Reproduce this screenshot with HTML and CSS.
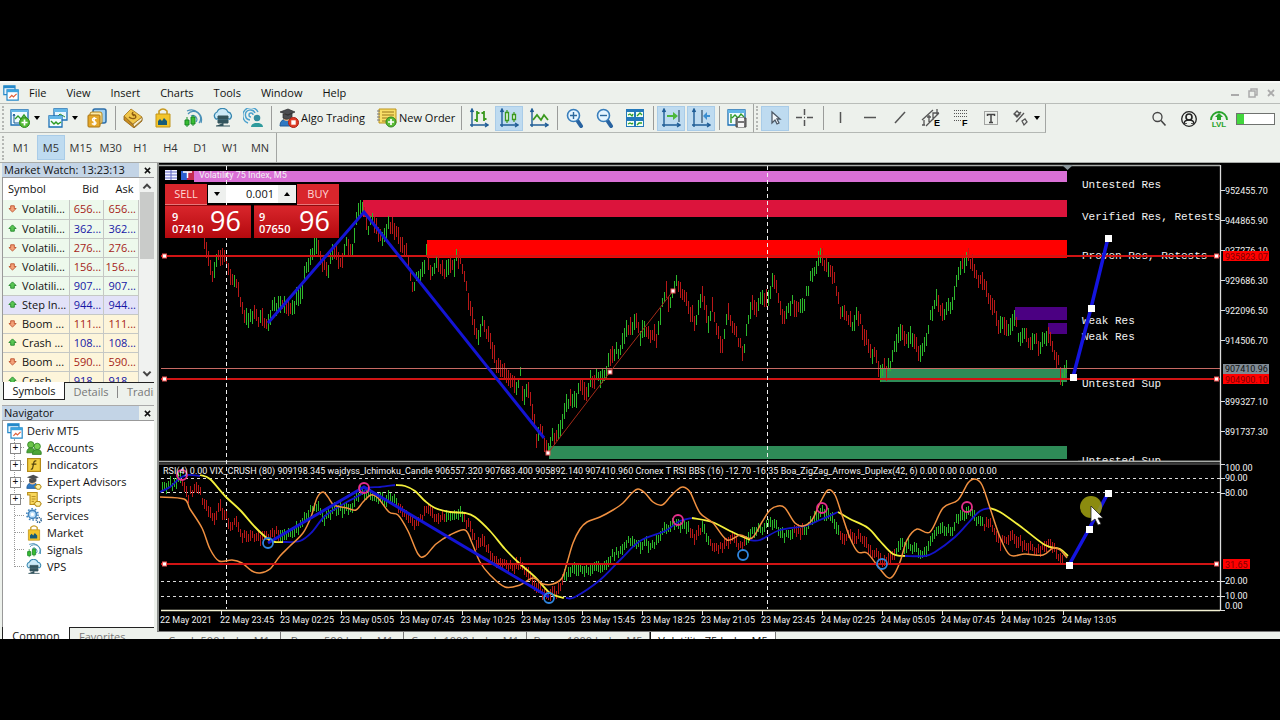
FILE: index.html
```html
<!DOCTYPE html>
<html lang="en">
<head>
<meta charset="utf-8">
<title>Deriv MT5</title>
<link rel="stylesheet" href="styles.css">
</head>
<body>
<svg class="defs" aria-hidden="true">
  <symbol id="i-app" viewBox="0 0 20 20"><path d="M1 1h14v11H1z" fill="#e8f4fc" stroke="#2589c9" stroke-width="1.5"/><path d="M1 1h14v3H1z" fill="#2589c9"/><path d="M5 6h14v13H5z" fill="#fff" stroke="#2589c9" stroke-width="1.5"/><path d="M5 6h14v3H5z" fill="#3ba4df"/><path d="M8 16l3-3 2 2 4-4" fill="none" stroke="#e0603a" stroke-width="1.5"/></symbol>
  <symbol id="i-newchart" viewBox="0 0 20 20"><path d="M1 2h17v15H1z" fill="#eefaff" stroke="#1b70b5" stroke-width="1.3"/><path d="M1 2h17v2H1z" fill="#63b7e8"/><path d="M4 6v9h7M3 8l1-2 1 2" fill="none" stroke="#165b94"/><path d="M5 11l3-3 3 3 3-4 3 4" fill="none" stroke="#2f9b26" stroke-width="1.4"/><circle cx="14.500" cy="14.500" r="5" fill="#54bb36" stroke="#2c8a1a"/><path d="M14.500 11.500v6M11.500 14.500h6" stroke="#fff" stroke-width="1.700"/></symbol>
  <symbol id="i-profiles" viewBox="0 0 20 20"><path d="M6 1h13v11H6z" fill="#e8f7ff" stroke="#1b70b5" stroke-width="1.3"/><path d="M6 1h13v3H6z" fill="#63b7e8"/><path d="M8 10l4-4 5 3" fill="none" stroke="#2f9b26"/><path d="M1 8h13v11H1z" fill="#f4fcff" stroke="#1b70b5" stroke-width="1.3"/><path d="M1 8h13v3H1z" fill="#63b7e8"/><path d="M3 13l3 3 2-2 2 2 3-2" fill="none" stroke="#2f9b26" stroke-width="1.4"/></symbol>
  <symbol id="i-coins" viewBox="0 0 20 20"><rect x="6" y="1" width="13" height="14" rx="2" fill="#9fd0f2" stroke="#2c6da8" stroke-width="1.500"/><rect x="3" y="4" width="12" height="12" rx="2" fill="#fbe9a6" stroke="#b5851a"/><rect x="1" y="7" width="12" height="12" rx="1" fill="#e5a82a" stroke="#a97413"/><path d="M9.500 10.700C7 9.300 5 10.500 5.500 12S9.500 13.500 9 15.200 6 16.500 4.800 15.400M7.200 9v8.500" fill="none" stroke="#fff" stroke-width="1.300"/></symbol>
  <symbol id="i-book" viewBox="0 0 20 20"><path d="M1 8l9 9 9-7v3l-8 7L1 12z" fill="#c98e1e" stroke="#8d5d11" stroke-width=".8"/><path d="M10 16l9-7v3l-8 7z" fill="#f5edcf" stroke="#8d6b24" stroke-width=".7"/><path d="M1 8L8 1l11 8-9 7z" fill="#f0c64a" stroke="#a5731a" stroke-width=".8"/><path d="M6 9q2 2 5 1.500T12 7L9 6M9 6l1-2M9 6l2 2" fill="none" stroke="#8d5d11" stroke-width="1.400"/></symbol>
  <symbol id="i-market" viewBox="0 0 20 20"><path d="M6 7V3q4-4 8 0v4" fill="none" stroke="#c79a21" stroke-width="1.600"/><path d="M3 6h14v13H3z" fill="#f3c52a" stroke="#c2951a"/><path d="M5 17v-4l2-2 2 2 2-3 3 3v4z" fill="#175c78"/></symbol>
  <symbol id="i-signals" viewBox="0 0 20 20"><path d="M5 6a7 7 0 0 1 11 9M8 8a4 4 0 0 1 5 6M4 3a10 10 0 0 1 14 12" fill="none" stroke="#4a91b8" stroke-width="1.200"/><path d="M4 9v10M10 7v11" stroke="#159426"/><path d="M2 12h4v5H2zM8 9h4v7H8z" fill="#38bd32" stroke="#168624"/></symbol>
  <symbol id="i-vps" viewBox="0 0 20 20"><path d="M3 11a4 4 0 0 1 1-7 6 6 0 0 1 11 0 4 4 0 0 1 2 7z" fill="#cceaf8" stroke="#3787b0" stroke-width="1.300"/><path d="M5 8h10v3H5zM5 12h10v3H5zM10 15v3H3m7 0h7" fill="#33545d" stroke="#33545d"/></symbol>
  <symbol id="i-community" viewBox="0 0 20 20"><path d="M5 15A8 8 0 1 1 15 4M7 12a5 5 0 1 1 5-7M8 9a2 2 0 1 1 2-2" fill="none" stroke="#4ba1cd" stroke-width="1.400"/><circle cx="14" cy="10" r="3.300" fill="#338ea0"/><path d="M8 19q0-3 4-4h4q4 1 4 4z" fill="#2f9b9d"/></symbol>
  <symbol id="i-algo" viewBox="0 0 20 20"><path d="M1 18q0-7 7-7t7 7z" fill="#2f79c3" stroke="#215b96"/><circle cx="8" cy="9" r="4" fill="#e9b887"/><path d="M1 4l8-3 7 3-7 3zM4 6v4q4 3 9-1V5L9 7z" fill="#4b4d50" stroke="#292b2d" stroke-width=".7"/><circle cx="14.500" cy="14.500" r="5" fill="#de3d27" stroke="#a91c12"/><rect x="12.300" y="12.300" width="4.400" height="4.400" fill="#fff"/></symbol>
  <symbol id="i-expert" viewBox="0 0 20 20"><path d="M1 18q0-7 7-7t7 7z" fill="#2f79c3" stroke="#215b96"/><circle cx="8" cy="9" r="4" fill="#e9b887"/><path d="M1 4l8-3 7 3-7 3zM4 6v4q4 3 9-1V5L9 7z" fill="#4b4d50"/><path d="M11 16l3-3h3l2 3-2 3h-3z" fill="#fff3aa" stroke="#b9921f" stroke-width="1.300"/></symbol>
  <symbol id="i-order" viewBox="0 0 20 20"><path d="M2 1h17v14H2z" fill="#f8df68" stroke="#bc941e"/><path d="M5 4h12M5 7h12M5 10h9M5 13h7" stroke="#98771c" stroke-width="1.200"/><path d="M0 3h3M0 6h3M0 9h3M0 12h3" stroke="#777"/><circle cx="14" cy="14" r="5" fill="#5bbb37" stroke="#2f871d"/><path d="M14 11v6M11 14h6" stroke="#fff" stroke-width="1.700"/></symbol>
  <symbol id="i-axes" viewBox="0 0 20 20"><path d="M3 19V2M1 17h17M1.500 4L3 1l1.500 3M16 15l3 2-3 2" fill="none" stroke="#1f5d96" stroke-width="1.400"/></symbol>
  <symbol id="i-bars" viewBox="0 0 20 20"><use href="#i-axes"/><path d="M8 3v11M5.500 12H8M8 5h2.500M15 3v10M12.500 5H15M15 11h2.500" stroke="#3a991e" stroke-width="1.800"/></symbol>
  <symbol id="i-candles" viewBox="0 0 20 20"><use href="#i-axes"/><path d="M8 2v13M15 4v10" stroke="#3a991e" stroke-width="1.200"/><path d="M6.500 4.500h3v8h-3zM13.500 6.500h3v5h-3z" fill="#e2f4de" stroke="#3a991e" stroke-width="1.300"/></symbol>
  <symbol id="i-line" viewBox="0 0 20 20"><use href="#i-axes"/><path d="M4 12l4-5 4 5 3-5 4 5" fill="none" stroke="#3a991e" stroke-width="1.800"/></symbol>
  <symbol id="i-zoomin" viewBox="0 0 20 20"><path d="M12 12l4 6" stroke="#2863a0" stroke-width="4" stroke-linecap="round"/><circle cx="8.500" cy="7.500" r="6" fill="#e5f5ff" stroke="#397ebb" stroke-width="1.600"/><path d="M5 7.500h7M8.500 4v7" stroke="#2c699d" stroke-width="1.400"/></symbol>
  <symbol id="i-zoomout" viewBox="0 0 20 20"><path d="M12 12l4 6" stroke="#2863a0" stroke-width="4" stroke-linecap="round"/><circle cx="8.500" cy="7.500" r="6" fill="#e5f5ff" stroke="#397ebb" stroke-width="1.600"/><path d="M5 7.500h7" stroke="#2c699d" stroke-width="1.400"/></symbol>
  <symbol id="i-tile" viewBox="0 0 20 20"><path d="M1 1h18v18H1z" fill="#2379bb"/><path d="M2 4h7v5H2zM11 4h7v5h-7zM2 13h7v5H2zM11 13h7v5h-7z" fill="#f2fff4"/><path d="M3 7l2-1 2 2 1-2M12 8l3-3 2 2M3 16l2-1 2 1 1-1M12 17l2-2h3" fill="none" stroke="#2e9d29" stroke-width="1.300"/></symbol>
  <symbol id="i-shift" viewBox="0 0 20 20"><use href="#i-axes"/><path d="M18 2v12" stroke="#3a5871" stroke-width="1.300"/><path d="M6 7h6V4l5 4-5 4V9H6z" fill="#4db83b"/></symbol>
  <symbol id="i-scroll" viewBox="0 0 20 20"><use href="#i-axes"/><path d="M11 2v13" stroke="#3a5871" stroke-width="1.300"/><path d="M19 7h-3V4l-4 4 4 4V9h3z" fill="#3b8fd1"/></symbol>
  <symbol id="i-template" viewBox="0 0 20 20"><path d="M1 2h17v15H1z" fill="#effbff" stroke="#1b70b5" stroke-width="1.300"/><path d="M1 2h17v3H1z" fill="#63b7e8"/><path d="M4 6v9M5 10l3-3 3 3 3-4 3 3" fill="none" stroke="#2f9b26" stroke-width="1.400"/><path d="M9 10h10v9H9z" fill="#777" stroke="#484848"/><path d="M11 10h6v3h-6zM11 15h6v4h-6z" fill="#f6f6f6"/></symbol>
  <symbol id="i-cursor" viewBox="0 0 20 20"><path d="M7 4v11l3-3 2 4 2-1-2-4h3z" fill="#f2f7fb" stroke="#4c5865" stroke-width="1.300"/></symbol>
  <symbol id="i-cross" viewBox="0 0 20 20"><path d="M9.500 1v6M9.500 12v6M1 9.500h6M12 9.500h6M9 9.500h1" stroke="#555" stroke-width="1.500"/></symbol>
  <symbol id="i-vline" viewBox="0 0 20 20"><path d="M9.500 4v11" stroke="#555" stroke-width="1.500"/></symbol>
  <symbol id="i-hline" viewBox="0 0 20 20"><path d="M3 9.500h12" stroke="#555" stroke-width="1.500"/></symbol>
  <symbol id="i-trend" viewBox="0 0 20 20"><path d="M4 15L14 4" stroke="#555" stroke-width="1.500"/></symbol>
  <symbol id="i-equi" viewBox="0 0 20 20"><path d="M1 12L12 2M5 18L18 5M3 17v-5M1 17h3M8 14V7M6 9h4M12 12V5h2M16 7V1M14 5h4" stroke="#555" fill="none" stroke-width="1.300"/><text x="13" y="18" class="tool-letter">E</text></symbol>
  <symbol id="i-fibo" viewBox="0 0 20 20"><path d="M3 2.500h14M3 5.500h14M3 8.500h14M3 12.500h7" stroke="#555" stroke-width="1.200" stroke-dasharray="1 1"/><text x="11" y="18" class="tool-letter">F</text></symbol>
  <symbol id="i-text" viewBox="0 0 20 20"><rect x="3.500" y="3.500" width="13" height="13" fill="none" stroke="#555" stroke-dasharray="1 1"/><path d="M6.500 8V6.500h7V8M10 6.500v8M8 14.500h4" fill="none" stroke="#444" stroke-width="1.500"/></symbol>
  <symbol id="i-objects" viewBox="0 0 20 20"><path d="M6 14l8-9M4 6l3-3 3 3-3 3zM5 6l2 2 4-4M12 13l3-2 2 3-3 3z" fill="none" stroke="#555" stroke-width="1.300"/></symbol>
  <symbol id="i-search" viewBox="0 0 20 20"><circle cx="8.500" cy="8" r="4.500" fill="none" stroke="#444" stroke-width="1.300"/><path d="M12 11.500l4.500 5" stroke="#444" stroke-width="1.600"/></symbol>
  <symbol id="i-user" viewBox="0 0 20 20"><circle cx="10" cy="10" r="7.300" fill="none" stroke="#222" stroke-width="1.300"/><circle cx="10" cy="8" r="3" fill="none" stroke="#222" stroke-width="1.600"/><path d="M5 15q0-4 5-4t5 4M7 15v-1M13 15v-1" fill="none" stroke="#222" stroke-width="1.500"/></symbol>
  <symbol id="i-level" viewBox="0 0 20 20"><path d="M2 11a8 8 0 1 1 16 0" fill="none" stroke="#27a32a" stroke-width="1.800"/><path d="M10 4l4 4h-2v3H8V8H6z" fill="#27a32a"/><text x="10" y="18" text-anchor="middle" class="level-text">LVL</text></symbol>
  <symbol id="i-accounts" viewBox="0 0 20 20"><circle cx="6" cy="6" r="4" fill="#6ac247" stroke="#2b7d21"/><path d="M1 16q0-6 5-6t6 6z" fill="#4da637" stroke="#2b7d21"/><circle cx="14" cy="8" r="4" fill="#79cf53" stroke="#2b7d21"/><path d="M8 18q0-6 6-6t5 6z" fill="#4da637" stroke="#2b7d21"/></symbol>
  <symbol id="i-indicator" viewBox="0 0 20 20"><rect x="2" y="2" width="16" height="16" fill="#f3cf42" stroke="#b58a17" stroke-width="1.500"/><path d="M13 5q-3-1-3.500 3L8.500 13q-.5 3-2.500 2M7 9h6" fill="none" stroke="#51420e" stroke-width="1.500"/></symbol>
  <symbol id="i-script" viewBox="0 0 20 20"><path d="M2 2h12v15H5V5H2z" fill="#f8d75b" stroke="#b78c18" stroke-width="1.300"/><path d="M7 7h5M7 10h5M7 13h3" stroke="#a67a15"/><path d="M10 16l3-3h4l2 3-2 3h-4z" fill="#fff2a2" stroke="#b78c18" stroke-width="1.300"/></symbol>
  <symbol id="i-gear" viewBox="0 0 20 20"><circle cx="8" cy="8" r="5" fill="#bde0fa" stroke="#4284bd" stroke-width="2"/><circle cx="8" cy="8" r="7" fill="none" stroke="#4284bd" stroke-width="2" stroke-dasharray="2 2.400"/><circle cx="8" cy="8" r="2" fill="#fff"/><circle cx="16" cy="15" r="3" fill="#fff" stroke="#285f91" stroke-width="2" stroke-dasharray="1.500 1"/></symbol>
  <symbol id="i-up" viewBox="0 0 10 10"><path d="M5 1l4 4H7v3H3V5H1z" fill="#58c653" stroke="#23872a"/></symbol>
  <symbol id="i-down" viewBox="0 0 10 10"><path d="M5 9l4-4H7V2H3v3H1z" fill="#f3a279" stroke="#bd4f2b"/></symbol>
  <symbol id="i-caret" viewBox="0 0 8 8"><path d="M1 2h6L4 6z"/></symbol>
</svg>

<main class="app">
  <header class="menubar">
    <svg class="app-icon"><use href="#i-app"/></svg>
    <nav class="menus">
      <button>File</button><button>View</button><button>Insert</button><button>Charts</button><button>Tools</button><button>Window</button><button>Help</button>
    </nav>
    <div class="window-controls">
      <button aria-label="Minimize"><svg viewBox="0 0 10 10"><path d="M1 7h8" stroke="#aaa" stroke-width="2"/></svg></button>
      <button aria-label="Restore"><svg viewBox="0 0 10 10"><path d="M3 3V1h6v6H7M1 3h6v6H1z" fill="none" stroke="#aaa" stroke-width="1.500"/></svg></button>
      <button aria-label="Close"><svg viewBox="0 0 10 10"><path d="M2 2l6 6M8 2L2 8" stroke="#aaa" stroke-width="1.800"/></svg></button>
    </div>
  </header>

  <div class="toolbar-row">
    <div class="toolbar">
      <i class="grip"></i>
      <button class="tool drop" aria-label="New chart"><svg><use href="#i-newchart"/></svg><svg class="caret"><use href="#i-caret"/></svg></button>
      <button class="tool drop" aria-label="Profiles"><svg><use href="#i-profiles"/></svg><svg class="caret"><use href="#i-caret"/></svg></button>
      <button class="tool" aria-label="Market watch"><svg><use href="#i-coins"/></svg></button>
      <i class="sep"></i>
      <button class="tool" aria-label="Editor"><svg><use href="#i-book"/></svg></button>
      <button class="tool" aria-label="Market"><svg><use href="#i-market"/></svg></button>
      <button class="tool" aria-label="Signals"><svg><use href="#i-signals"/></svg></button>
      <button class="tool" aria-label="VPS"><svg><use href="#i-vps"/></svg></button>
      <button class="tool" aria-label="Community"><svg><use href="#i-community"/></svg></button>
      <i class="sep"></i>
      <button class="tool labelled algo"><svg><use href="#i-algo"/></svg>Algo Trading</button>
      <button class="tool labelled order"><svg><use href="#i-order"/></svg>New Order</button>
      <i class="sep"></i>
      <button class="tool" aria-label="Bar chart"><svg><use href="#i-bars"/></svg></button>
      <button class="tool active" aria-label="Candlesticks"><svg><use href="#i-candles"/></svg></button>
      <button class="tool" aria-label="Line chart"><svg><use href="#i-line"/></svg></button>
      <i class="sep"></i>
      <button class="tool" aria-label="Zoom in"><svg><use href="#i-zoomin"/></svg></button>
      <button class="tool" aria-label="Zoom out"><svg><use href="#i-zoomout"/></svg></button>
      <button class="tool" aria-label="Tile windows"><svg><use href="#i-tile"/></svg></button>
      <i class="sep"></i>
      <button class="tool active" aria-label="Auto scroll"><svg><use href="#i-shift"/></svg></button>
      <button class="tool active" aria-label="Chart shift"><svg><use href="#i-scroll"/></svg></button>
      <i class="sep"></i>
      <button class="tool" aria-label="Templates"><svg><use href="#i-template"/></svg></button>
    </div>
    <div class="toolbar">
      <i class="grip"></i>
      <button class="tool active" aria-label="Cursor"><svg><use href="#i-cursor"/></svg></button>
      <button class="tool" aria-label="Crosshair"><svg><use href="#i-cross"/></svg></button>
      <i class="sep"></i>
      <button class="tool" aria-label="Vertical line"><svg><use href="#i-vline"/></svg></button>
      <button class="tool" aria-label="Horizontal line"><svg><use href="#i-hline"/></svg></button>
      <button class="tool" aria-label="Trend line"><svg><use href="#i-trend"/></svg></button>
      <button class="tool" aria-label="Equidistant channel"><svg><use href="#i-equi"/></svg></button>
      <button class="tool" aria-label="Fibonacci"><svg><use href="#i-fibo"/></svg></button>
      <button class="tool" aria-label="Text"><svg><use href="#i-text"/></svg></button>
      <button class="tool drop" aria-label="Objects"><svg><use href="#i-objects"/></svg><svg class="caret"><use href="#i-caret"/></svg></button>
    </div>
    <div class="status">
      <button class="tool" aria-label="Search"><svg><use href="#i-search"/></svg></button>
      <button class="tool" aria-label="Account"><svg><use href="#i-user"/></svg></button>
      <button class="tool" aria-label="Level"><svg><use href="#i-level"/></svg></button>
      <div class="meter"><div class="meter-fill"></div></div>
    </div>
  </div>

  <div class="timeframes">
    <i class="grip"></i>
    <button>M1</button><button class="active">M5</button><button>M15</button><button>M30</button><button>H1</button><button>H4</button><button>D1</button><button>W1</button><button>MN</button>
  </div>

  <div class="workspace">
    <aside class="sidebar">
      <section class="panel watch">
        <h2 class="panel-title">Market Watch: 13:23:13<button aria-label="Close market watch"><svg viewBox="0 0 8 8"><path d="M1 1l6 6M7 1L1 7" stroke="#111" stroke-width="1.700"/></svg></button></h2>
        <div class="watch-body">
          <div class="watch-list">
          <table>
            <thead><tr><th class="symbol">Symbol</th><th>Bid</th><th>Ask</th></tr></thead>
            <tbody id="quotes"></tbody>
          </table>
          </div>
          <div class="scrollbar">
            <svg viewBox="0 0 10 10"><path d="M2 7l3-3 3 3" fill="none" stroke="#444" stroke-width="1.700"/></svg>
            <div class="thumb"></div>
            <svg viewBox="0 0 10 10"><path d="M2 3l3 3 3-3" fill="none" stroke="#444" stroke-width="1.700"/></svg>
          </div>
        </div>
        <div class="tabs watch-tabs"><button class="current">Symbols</button><button>Details</button><button class="divided"><span>Trading</span></button></div>
      </section>
      <section class="panel navigator">
        <h2 class="panel-title">Navigator<button aria-label="Close navigator"><svg viewBox="0 0 8 8"><path d="M1 1l6 6M7 1L1 7" stroke="#111" stroke-width="1.700"/></svg></button></h2>
        <div class="tree">
          <div class="root"><svg><use href="#i-app"/></svg>Deriv MT5</div>
          <ul>
            <li class="plus"><svg><use href="#i-accounts"/></svg>Accounts</li>
            <li class="plus"><svg><use href="#i-indicator"/></svg>Indicators</li>
            <li class="plus"><svg><use href="#i-expert"/></svg>Expert Advisors</li>
            <li class="plus"><svg><use href="#i-script"/></svg>Scripts</li>
            <li><svg><use href="#i-gear"/></svg>Services</li>
            <li><svg><use href="#i-market"/></svg>Market</li>
            <li><svg><use href="#i-signals"/></svg>Signals</li>
            <li><svg><use href="#i-vps"/></svg>VPS</li>
          </ul>
        </div>
        <div class="tabs nav-tabs"><button class="current">Common</button><button>Favorites</button></div>
      </section>
    </aside>

    <section class="chart-area">
      <div class="chart-window">
        <svg class="chart" id="chart" viewBox="159 163 1121 468" preserveAspectRatio="xMinYMin meet"></svg>
        <form class="trade">
          <button type="button" class="side sell">SELL</button>
          <div class="volume">
            <button type="button" aria-label="Decrease volume"><svg><use href="#i-caret"/></svg></button>
            <input aria-label="Volume" value="0.001">
            <button type="button" aria-label="Increase volume"><svg class="flip"><use href="#i-caret"/></svg></button>
          </div>
          <button type="button" class="side buy">BUY</button>
          <button type="button" class="price"><span class="small">9<br>07410</span><span class="big">96</span></button>
          <button type="button" class="price"><span class="small">9<br>07650</span><span class="big">96</span></button>
        </form>
      </div>
      <div class="chart-tabs">
        <button>Crash 500 Index,M1</button><button>Boom 500 Index,M1</button><button>Crash 1000 Index,M1</button><button>Boom 1000 Index,M5</button><button class="current">Volatility 75 Index,M5</button>
      </div>
    </section>
  </div>
</main>
<script src="chart.js"></script>
</body>
</html>
```

FILE: styles.css
```css
* { box-sizing: border-box; }
html, body { height: 100%; }
body {
  margin: 0;
  padding: 81px 0;
  background: #000;
  color: #111;
  font: 12px/16px "Open Sans", "Noto Sans", sans-serif;
  overflow: hidden;
}
button, input { font: inherit; color: inherit; border: 0; background: none; padding: 0; margin: 0; }
svg { display: block; flex: none; }
.defs { display: none; }

.app { display: flex; flex-direction: column; height: 100%; overflow: hidden; background: #edf1ec; border-top: 2px solid #f8faf7; }

.menubar { display: flex; align-items: center; flex: none; height: 21px; padding: 0 4px 0 3px; border-bottom: 1px solid #b9bdb9; }
.app-icon { width: 16px; height: 16px; }
.menus { display: flex; flex: 1; gap: 20px; padding-left: 10px; font-size: 11px; }
.window-controls { display: flex; gap: 8px; }
.window-controls svg { width: 10px; height: 10px; }

.toolbar-row { display: flex; flex: none; height: 29px; }
.toolbar { display: flex; align-items: center; gap: 2px; padding: 0 2px; border-right: 1px solid #a3a6a3; border-bottom: 1px solid #b4b8b4; }
.grip { width: 3px; height: 24px; border-left: 2px dotted #b4b7b4; }
.sep { width: 1px; height: 24px; margin: 0 1px 0 2px; background: #9a9c9a; }
.tool { display: flex; align-items: center; justify-content: center; width: 28px; height: 25px; }
.tool svg { width: 20px; height: 20px; }
.tool.drop { width: 36px; justify-content: flex-start; gap: 3px; padding-left: 3px; }
.tool .caret { width: 8px; height: 8px; }
.active { background: #bedbf0; outline: 1px solid #a9cce8; outline-offset: -1px; }
.tool.labelled { justify-content: flex-start; gap: 2px; padding-left: 4px; font-size: 11px; white-space: nowrap; }
.tool.algo { width: 96px; }
.tool.order { width: 84px; }
.tool-letter { font: bold 9px "Liberation Sans", sans-serif; }
.level-text { font: bold 8px "Liberation Sans", sans-serif; fill: #27a32a; }
.status { display: flex; align-items: center; gap: 2px; margin-left: auto; padding-right: 5px; }
.meter { width: 39px; height: 12px; margin-left: 1px; border: 1px solid #6f726f; background: #fff; }
.meter-fill { width: 20%; height: 100%; background: #42d63d; }

.timeframes { display: flex; align-items: center; align-self: flex-start; flex: none; gap: 2px; height: 29px; width: 277px; padding: 0 2px; border-right: 1px solid #a3a6a3; }
.timeframes button { width: 28px; height: 25px; font-size: 11px; color: #333; }

.workspace { display: flex; flex: 1; min-height: 0; border-top: 1px solid #a8aba8; }
.sidebar { display: flex; flex-direction: column; flex: none; width: 157px; padding: 0 3px 0 2px; }
.panel { display: flex; flex-direction: column; }
.panel-title { display: flex; align-items: center; justify-content: space-between; flex: none; height: 14px; margin: 0; padding: 0 0 0 2px; background: linear-gradient(90deg, #c3d4e6 0 90%, #edf1ec 90%); font-size: 11px; line-height: 14px; font-weight: 400; }
.panel-title button { padding: 3px; }
.panel-title svg { width: 7px; height: 7px; }
.watch-body { display: flex; height: 205px; border-top: 1px solid #999; border-left: 1px solid #999; background: #fff; }
.watch-list { flex: 1; overflow: hidden; }
table { width: 100%; table-layout: fixed; border-collapse: collapse; font-size: 11px; }
th { height: 22px; padding: 0 5px 0 0; font-weight: 400; text-align: right; }
th.symbol { width: 66px; padding-left: 5px; text-align: left; }
td { height: 19px; padding: 0 2px 0 0; border-bottom: 1px solid #c5c8c5; border-right: 1px solid #c5c8c5; line-height: 16px; text-align: right; white-space: nowrap; }
td.symbol { padding: 0 0 0 5px; text-align: left; }
td svg { display: inline-block; width: 9px; height: 9px; margin-right: 5px; }
.group-vol { background: #edf9ec; }
.group-step { background: #e2e2f8; }
.group-boom { background: #fdf5da; }
.rise { color: #1717a5; }
.fall { color: #a51d17; }
.scrollbar { display: flex; flex-direction: column; align-items: center; width: 15px; padding: 2px 0; background: #f0f2f0; }
.scrollbar svg { width: 12px; height: 12px; }
.thumb { width: 14px; height: 67px; margin-bottom: auto; background: #c9cbc9; }
.tabs { display: flex; flex: none; overflow: hidden; font-size: 11px; }
.tabs button { border-top: 1px solid #222; color: #777; white-space: nowrap; }
.tabs .current { border: 1px solid #222; border-top: 0; background: #fff; color: #111; }
.watch-tabs { height: 19px; padding-left: 1px; }
.watch-tabs .current { width: 62px; }
.watch-tabs button { flex: none; width: 52px; height: 18px; }
.watch-tabs .divided { width: 60px; text-align: left; }
.divided span { display: block; border-left: 1px solid #888; padding-left: 9px; line-height: 12px; }

.navigator { flex: 1; min-height: 0; margin-top: 4px; border-top: 1px solid #aaa; }
.tree { flex: 1; min-height: 0; padding: 1px 0 0 4px; border-top: 1px solid #999; border-left: 1px solid #999; background: #fff; line-height: 17px; font-size: 11px; }
.root { display: flex; align-items: center; gap: 4px; }
.tree svg { width: 16px; height: 16px; }
ul { margin: 0 0 0 7px; padding: 0; list-style: none; border-left: 1px dotted #999; height: 128px; }
li { position: relative; display: flex; align-items: center; gap: 5px; height: 17px; padding-left: 11px; background: repeating-linear-gradient(90deg, #999 0 1px, transparent 1px 2px) 0 8px / 10px 1px no-repeat; }
li.plus::before { content: "+"; position: absolute; left: -5px; top: 4px; width: 9px; height: 9px; border: 1px solid #888; background: #fff; font: 10px/7px "Liberation Sans", sans-serif; text-align: center; }
.nav-tabs { height: 12px; }
.nav-tabs button { flex: none; height: 18px; padding: 0 9px; }
.nav-tabs .current { width: 68px; }
.nav-tabs button:last-child { flex: 1; text-align: left; }

.chart-area { display: flex; flex-direction: column; flex: 1; min-width: 0; background: #000; }
.chart-window { position: relative; flex: 1; min-height: 0; border-left: 2px solid #8d908d; }
.chart { width: 100%; height: 468px; }
.chart text { font: 9px Roboto, "Noto Sans", sans-serif; fill: #f2f2f2; white-space: pre; }
.chart .zone-label { font: 11px "Liberation Mono", monospace; }
.chart .dark { fill: #111; }
.chart .on-red { fill: #7d0000; }
.trade { position: absolute; left: 6px; top: 21px; display: grid; grid-template-columns: 42px 43px 44px 42px; grid-template-rows: 21px 33px; color: #fff; column-gap: 1px; }
.side { background: #d9262c; font-size: 11px; border-bottom: 1px solid #e8777a; color: #ffd9d6; }
.volume { grid-column: span 2; display: flex; margin: 1px 0 2px; background: #fff; color: #111; }
.volume button { display: grid; place-items: center; width: 18px; background: #eef0ee; }
.volume svg { width: 8px; height: 8px; }
.flip { transform: rotate(180deg); }
.volume input { flex: 1; min-width: 0; padding-right: 4px; text-align: right; font-size: 11px; }
.price { grid-column: span 2; display: flex; align-items: flex-end; justify-content: space-between; padding: 0 10px 3px 7px; background: linear-gradient(#d9262c, #b4090e); text-align: left; border-top: 1px solid #8d0b0e; }
.price + .price { margin-left: 2px; padding-right: 9px; padding-left: 5px; }
.small { font-size: 11px; line-height: 12px; font-weight: 600; }
.big { font-size: 27px; line-height: 28px; }
.chart-tabs { display: flex; flex: none; height: 8px; overflow: hidden; background: #edf1ec; border-top: 1px solid #777; color: #666; font-size: 11px; padding-left: 1px; }
.chart-tabs button { flex: none; width: 123px; height: 18px; border-right: 1px solid #777; line-height: 18px; }
.chart-tabs .current { width: 126px; background: #fff; color: #111; border-left: 1px solid #111; }
```

FILE: chart.js
```javascript
const NS = "http://www.w3.org/2000/svg";
const chart = document.getElementById("chart");

function add(tag, attrs, text) {
  const node = document.createElementNS(NS, tag);
  for (const key in attrs) node.setAttribute(key, attrs[key]);
  if (text !== undefined) node.textContent = text;
  chart.appendChild(node);
  return node;
}
const rect = (x, y, width, height, fill) => add("rect", { x, y, width, height, fill });
const line = (d, stroke, width = 1, extra = {}) =>
  add("path", { d, stroke, "stroke-width": width, fill: "none", ...extra });
const label = (x, y, text, cls = "") => add("text", { x, y, class: cls }, text);

function pairs(text) {
  return text.trim().split(/\s+/).map(p => p.split(",").map(Number));
}

function smooth(text) {
  const p = pairs(text);
  let d = `M${p[0]}`;
  for (let i = 0; i < p.length - 1; i++) {
    const a = p[Math.max(i - 1, 0)], b = p[i], c = p[i + 1], e = p[Math.min(i + 2, p.length - 1)];
    d += `C${b[0] + (c[0] - a[0]) / 6},${b[1] + (c[1] - a[1]) / 6} ${c[0] - (e[0] - b[0]) / 6},${c[1] - (e[1] - b[1]) / 6} ${c}`;
  }
  return d;
}

let seed = 7;
function random() {
  seed = (seed * 16807) % 2147483647;
  return seed / 2147483647;
}

function candles(text, low, high, color) {
  const p = pairs(text);
  let i = 0;
  const bars = { up: "", down: "" };
  for (let x = p[0][0] + 0.5; x <= p[p.length - 1][0]; x += 2) {
    while (i < p.length - 2 && x > p[i + 1][0]) i++;
    const t = (x - p[i][0]) / (p[i + 1][0] - p[i][0]);
    const y = p[i][1] + t * (p[i + 1][1] - p[i][1]) + (random() - 0.5) * low;
    const half = low / 2 + random() * (high - low) / 2;
    const slope = (p[i + 1][1] - p[i][1]) / (p[i + 1][0] - p[i][0]);
    const name = color(x, slope + (random() - 0.5) * 1.5);
    bars[name] += `M${x} ${Math.round(y - half)}V${Math.round(y + half)}`;
  }
  line(bars.down, "#b81818", 1);
  line(bars.up, "#2cb82c", 1);
}

const priceTrack = `204,243 209,262 213,275 218,252 225,258 233,285 236,277 240,300 245,320 253,313 260,320 267,323
272,310 285,303 292,313 297,298 302,290 305,273 310,257 317,243 320,257 328,271 333,253 343,260 347,243 352,257
357,215 363,210 368,227 373,218 382,240 389,222 395,230 400,243 407,250 413,287 418,273 423,273 427,250 431,273
438,262 445,272 450,260 454,265 458,255 464,273 468,300 473,317 478,337 483,323 490,343 497,367 503,373 512,377
515,390 521,373 523,397 528,387 533,413 537,440 540,427 548,453 553,433 557,440 567,400 577,398 579,380 587,393
592,378 600,377 606,377 609,357 617,352 622,347 627,323 632,333 635,318 640,337 645,327 650,332 657,337 662,307
666,292 669,303 677,283 682,290 688,303 695,323 702,293 708,327 712,303 717,333 723,348 728,313 735,332 743,353
752,302 758,307 763,295 767,300 774,280 783,315 788,313 793,303 800,307 805,302 810,280 815,267 822,255 828,272
832,270 837,293 842,317 844,308 852,323 858,315 863,330 872,353 875,353 880,373 883,367 888,370 893,353 902,330
908,342 913,337 919,353 925,347 930,320 937,300 943,313 952,303 957,280 961,263 964,270 967,255 973,267 978,277
983,282 988,293 995,310 1000,330 1003,320 1008,330 1015,315 1018,337 1025,333 1031,345 1035,333 1039,350 1043,335
1048,335 1053,347 1058,360 1061,377 1065,375 1067,370`;

const rsiTrack = `162,488 170,485 182,478 188,497 195,488 200,492 208,512 213,518 220,508 232,525 237,522 243,537 267,538
275,533 283,533 292,535 300,525 310,510 318,505 325,518 333,510 347,510 353,505 360,492 367,492 377,497 383,500
392,497 397,505 407,512 415,523 427,512 437,517 445,515 460,512 467,522 477,543 485,543 493,558 498,563 513,567
522,565 527,570 537,588 548,594 557,592 567,573 582,568 590,570 607,563 612,555 620,552 628,542 635,542 640,545
658,543 665,528 677,523 687,528 695,538 702,528 707,535 713,545 722,548 732,538 743,548 750,533 762,530 773,523
787,537 795,532 803,532 813,520 822,510 833,520 842,537 860,537 873,553 882,560 892,555 900,545 907,545 920,552
927,550 937,530 952,532 958,518 967,512 975,517 983,525 990,525 1000,542 1013,538 1023,545 1038,550 1047,545
1053,547 1058,555 1063,563`;

// Stretches of the lower pane where the oscillator is drawn as falling.
const redSpans = [[182, 280], [397, 445], [463, 563], [690, 701], [710, 745], [793, 804], [840, 895], [983, 1070]];

rect(159, 163, 1121, 468, "#000");
line("M159 165.500H1220M159 461.500H1220", "#a9aca9", 1.5);
line("M159 464H1220", "#777", 1);

rect(194, 171, 873, 11, "#da70d6");
rect(363, 200, 704, 17, "#dc143c");
rect(427, 240, 640, 18, "#ff0000");
rect(1015, 307, 52, 13, "#4b0082");
rect(1048, 323, 19, 11, "#4b0082");
rect(881, 369, 186, 13, "#2e8b57");
rect(549, 446, 518, 13, "#2e8b57");
add("path", { d: "M1062 165h11l-5.500 5z", fill: "#8a969a" });

candles(priceTrack, 9, 18, (x, slope) => slope < 0 ? "up" : "down");
line("M161 368.500H1220", "#c86a64", 1);
line("M161 256H1220M161 379H1220", "#d01414", 2);
line("M548 453L610 372L673 291", "#a32a18", 1);

label(1082, 188, "Untested Res", "zone-label");
label(1082, 220, "Verified Res, Retests", "zone-label");
label(1082, 259, "Proven Res, Retests", "zone-label");
label(1082, 324, "Weak Res", "zone-label");
label(1082, 340, "Weak Res", "zone-label");
label(1082, 387, "Untested Sup", "zone-label");
label(1082, 464, "Untested Sup", "zone-label");
rect(1078, 461, 142, 8, "#000");
line("M1078 461.500H1220", "#a9aca9", 1.5);
line("M1078 464H1220", "#777", 1);
line("M1082 256H1220", "#d01414", 2);

line("M161 478.500H1220M161 492.500H1220M161 581.500H1220M161 596.500H1220", "#ddd", 1, { "stroke-dasharray": "3 3" });
line("M226.500 166V609M767.500 166V609", "#eee", 1, { "stroke-dasharray": "4 3" });

candles(rsiTrack, 7, 12, x => redSpans.some(([a, b]) => x > a && x < b) ? "down" : "up");

const blue = "#1313c8", yellow = "#f4f03c", orange = "#f09040";
[
  [blue, "160,492 170,487 180,478 188,475 200,476"],
  [yellow, "200,475 210,479 225,496 240,510 255,527 268,539 275,542 283,542"],
  [blue, "283,542 300,541 312,532 325,516 345,503 360,495 368,488 380,487 395,485"],
  [yellow, "396,485 405,486 415,491 425,501 435,508 450,512 465,513 475,517 490,531 505,549 520,564 535,577 550,593 564,598"],
  [blue, "566,598 575,597 600,580 620,560 640,541 665,531 680,521 692,518"],
  [yellow, "692,518 712,522 730,531 750,540"],
  [blue, "750,540 760,540 780,530 805,526 820,520 838,512"],
  [yellow, "838,512 850,519 868,528 880,541 893,554 905,556"],
  [blue, "905,556 925,556 935,552 955,537 970,521 980,511 990,508"],
  [yellow, "990,508 1000,512 1020,526 1045,545 1060,549 1068,556"]
].forEach(([color, track]) => line(smooth(track), color, 1.8));

line(smooth(`160,497 184,499 190,509 202,528 210,549 219,561 232,560 242,563 252,571 260,573 270,569 280,556 290,546
303,533 311,517 317,498 323,492 328,497 334,505 347,508 356,510 363,502 371,495 378,498 389,512 398,515 408,531
418,554 425,556 436,544 450,535 465,530 472,543 480,562 490,575 505,587 520,585 533,578 543,584 553,584 562,578
567,563 573,543 580,529 587,522 600,517 613,510 623,503 632,493 638,489 645,493 653,502 662,505 670,497 677,490
683,487 690,492 700,513 713,523 727,540 740,535 752,538 762,522 770,510 778,506 785,508 795,523 803,526 812,520
820,503 828,490 835,495 842,515 850,538 858,552 867,553 877,565 887,577 893,576 900,562 907,540 917,529 930,532
943,508 958,500 968,483 975,479 982,485 990,508 1000,537 1010,555 1025,554 1043,555 1053,548 1060,550 1067,558`), orange, 1.5);

line("M161 564H1216", "#d01414", 2);
line("M268 323L364 212L544 438M268 543L364 487L549 597", "#1414d4", 3);
line("M1073 377L1091 308L1108 238M1069 565L1089 529L1108 493", "#1414e0", 3.5);

[[182, 475], [364, 488], [678, 520], [822, 508], [967, 507]].forEach(([cx, cy]) =>
  add("circle", { cx, cy, r: 5, fill: "none", stroke: "#e62e8a", "stroke-width": 1.8 }));
[[268, 543], [549, 598], [743, 555], [882, 564]].forEach(([cx, cy]) =>
  add("circle", { cx, cy, r: 5, fill: "none", stroke: "#2f86e0", "stroke-width": 1.8 }));
[[164.5, 256], [1216.5, 256], [164.5, 379], [1216.5, 379], [164.5, 564], [1216.5, 564], [548, 453], [610, 372], [673, 291]]
  .forEach(([x, y]) => add("rect", { x: x - 2, y: y - 2, width: 4, height: 4, fill: "#fff", stroke: "#e55", "stroke-width": 1 }));
[[1073, 377], [1091, 308], [1108, 238], [1069, 565], [1089, 529], [1108, 493]]
  .forEach(([x, y]) => rect(x - 3, y - 3, 7, 7, "#fff"));

line("M1220.500 165V611", "#ddd", 1.3);
line("M161 610.500H1220", "#f4f1d2", 1.3);
[["952455.70", 190], ["944865.90", 220], ["937276.10", 250], ["929686.30", 280], ["922096.50", 310],
 ["914506.70", 340], ["899327.10", 401], ["891737.30", 431]].forEach(([text, y]) => {
  line(`M1221 ${y + 0.5}h4`, "#ddd");
  label(1225, y + 4, text);
});
rect(1223, 251, 46, 10, "#f00");
label(1225, 260, "935823.07", "on-red");
rect(1223, 374, 46, 10, "#f00");
label(1225, 383, "904900.10", "on-red");
rect(1223, 364, 46, 10, "#7f8a94");
label(1225, 372, "907410.96", "dark");
[["100.00", 468], ["90.00", 478], ["80.00", 493], ["20.00", 581], ["10.00", 596], ["0.00", 606]]
  .forEach(([text, y]) => label(1225, y + 3, text));
line("M1221 464.500h4M1221 478.500h4M1221 493.500h4M1221 581.500h4M1221 596.500h4M1221 610.500h4", "#ddd");
rect(1223, 559, 27, 10, "#f00");
label(1225, 568, "31.65", "on-red");

["22 May 2021", "22 May 23:45", "23 May 02:25", "23 May 05:05", "23 May 07:45", "23 May 10:25", "23 May 13:05",
 "23 May 15:45", "23 May 18:25", "23 May 21:05", "23 May 23:45", "24 May 02:25", "24 May 05:05", "24 May 07:45",
 "24 May 10:25", "24 May 13:05"].forEach((text, i) => {
  const x = 160 + Math.round(i * 60.1);
  if (i) line(`M${x + 1.5} 611v4`, "#ddd");
  label(x, 623, text);
});
label(163, 474, "RSI(4) 0.00 VIX_CRUSH (80) 909198.345 wajdyss_Ichimoku_Candle 906557.320 907683.400 905892.140 907410.960 Cronex T RSI BBS (16) -12.70 -16.35 Boa_ZigZag_Arrows_Duplex(42, 6) 0.00 0.00 0.00 0.00");

rect(165, 170, 12, 10, "#f2f2ff");
line("M165 172H177M165 175H177M165 178H177M171 170V180", "#5c62c4");
rect(181, 171, 7, 9, "#2d5fd0");
rect(187, 171, 7, 9, "#c42a50");
line("M183 172h9M187.500 172v6", "#fff", 1.5);
label(199, 178, "Volatility 75 Index, M5");

add("circle", { cx: 1091, cy: 507, r: 11, fill: "#a3a312", opacity: 0.85 });
add("path", { d: "M1091 506v16l4-3 3 6 3-1-3-6h5z", fill: "#fff", stroke: "#222", "stroke-width": 0.8 });

const quotes = [
  ["Volatili...", "656...", "656...", "fall", "vol"],
  ["Volatili...", "362...", "362...", "rise", "vol"],
  ["Volatili...", "276...", "276...", "fall", "vol"],
  ["Volatili...", "156...", "156....", "fall", "vol"],
  ["Volatili...", "907...", "907...", "rise", "vol"],
  ["Step In...", "944...", "944...", "rise", "step"],
  ["Boom ...", "111...", "111...", "fall", "boom"],
  ["Crash ...", "108...", "108...", "rise", "boom"],
  ["Boom ...", "590...", "590...", "fall", "boom"],
  ["Crash ...", "918...", "918...", "rise", "boom"]
];
document.getElementById("quotes").innerHTML = quotes.map(([name, bid, ask, dir, group]) =>
  `<tr class="group-${group}"><td class="symbol"><svg><use href="#i-${dir === "rise" ? "up" : "down"}"/></svg>${name}</td>` +
  `<td class="${dir}">${bid}</td><td class="${dir}">${ask}</td></tr>`).join("");
```
